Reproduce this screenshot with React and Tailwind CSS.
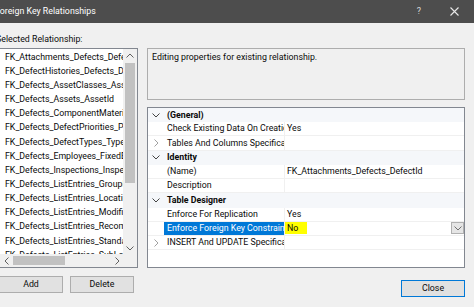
import React from "react";

const items = [
  "FK_Attachments_Defects_DefectId",
  "FK_DefectHistories_Defects_DefectId",
  "FK_Defects_AssetClasses_AssetClassId",
  "FK_Defects_Assets_AssetId",
  "FK_Defects_ComponentMaterials_MaterialId",
  "FK_Defects_DefectPriorities_PriorityId",
  "FK_Defects_DefectTypes_TypeId",
  "FK_Defects_Employees_FixedById",
  "FK_Defects_Inspections_InspectionId",
  "FK_Defects_ListEntries_GroupId",
  "FK_Defects_ListEntries_LocationId",
  "FK_Defects_ListEntries_ModifiedById",
  "FK_Defects_ListEntries_RecommendationId",
  "FK_Defects_ListEntries_StandardId",
  "FK_Defects_ListEntries_SubLocationId",
];

const Down = ({ className = "" }) => (
  <svg width="8" height="5" viewBox="0 0 8 5" className={className}>
    <path d="M0.5 0.5 L4 4 L7.5 0.5" fill="none" stroke="currentColor" strokeWidth="1" />
  </svg>
);
const Right = ({ className = "" }) => (
  <svg width="5" height="8" viewBox="0 0 5 8" className={className}>
    <path d="M0.5 0.5 L4 4 L0.5 7.5" fill="none" stroke="currentColor" strokeWidth="1" />
  </svg>
);
const Up = ({ className = "" }) => (
  <svg width="8" height="5" viewBox="0 0 8 5" className={className}>
    <path d="M0.5 4.5 L4 1 L7.5 4.5" fill="none" stroke="currentColor" strokeWidth="1" />
  </svg>
);
const Left = ({ className = "" }) => (
  <svg width="5" height="8" viewBox="0 0 5 8" className={className}>
    <path d="M4.5 0.5 L1 4 L4.5 7.5" fill="none" stroke="currentColor" strokeWidth="1" />
  </svg>
);

const rows = [
  { type: "cat", name: "(General)" },
  { name: "Check Existing Data On Creation Or Re-Enabling", value: "Yes" },
  { name: "Tables And Columns Specification", value: "", expand: true },
  { type: "cat", name: "Identity" },
  { name: "(Name)", value: "FK_Attachments_Defects_DefectId" },
  { name: "Description", value: "" },
  { type: "cat", name: "Table Designer" },
  { name: "Enforce For Replication", value: "Yes" },
  { name: "Enforce Foreign Key Constraint", value: "No", selected: true },
  { name: "INSERT And UPDATE Specification", value: "", expand: true },
];

export default function App() {
  return (
    <div className="w-[474px] h-[307px] bg-[#f0f0f0] flex flex-col overflow-hidden font-['Roboto',sans-serif] text-[8.8px] text-[#0a0a0a] leading-none">
      {/* title bar */}
      <div className="h-[23px] bg-[#4d4d4d] flex items-center text-white shrink-0">
        <span className="ml-[-5px] text-[8.8px] whitespace-nowrap">Foreign Key Relationships</span>
        <div className="flex-1" />
        <span className="text-[9px] text-[#d8d8d8] mr-[29px]">?</span>
        <svg width="9" height="9" viewBox="0 0 9 9" className="mr-[15px]">
          <path d="M0.5 0.5 L8.5 8.5 M8.5 0.5 L0.5 8.5" stroke="#e8e8e8" strokeWidth="1.1" />
        </svg>
      </div>

      <div className="flex flex-1 min-h-0">
        {/* left column */}
        <div className="w-[138px] flex flex-col shrink-0">
          <div className="h-[25px] flex items-center ml-[-4px] pt-[7px] whitespace-nowrap">Selected Relationship:</div>
          <div className="ml-[-1px] h-[220px] border border-[#828790] bg-white flex flex-col">
            <div className="flex flex-1 min-h-0">
              <div className="flex-1 overflow-hidden pt-[1px]">
                {items.map((t) => (
                  <div key={t} className="h-[14.15px] flex items-center pl-[5px] whitespace-nowrap">
                    {t}
                  </div>
                ))}
              </div>
              {/* vertical scrollbar */}
              <div className="w-[14px] bg-[#f0f0f0] flex flex-col items-center">
                <div className="h-[13px] flex items-center justify-center text-[#606060]">
                  <Up />
                </div>
                <div className="flex-1 w-full px-[2px] pt-[1px]">
                  <div className="h-[120px] bg-[#c1c1c1] w-full" />
                </div>
                <div className="h-[12px] flex items-center justify-center text-[#606060]">
                  <Down />
                </div>
              </div>
            </div>
            {/* horizontal scrollbar */}
            <div className="h-[13px] flex shrink-0">
              <div className="flex-1 bg-[#f0f0f0] flex items-center">
                <div className="w-[13px] flex justify-center text-[#606060]">
                  <Left />
                </div>
                <div className="w-[52px] h-[9px] bg-[#c1c1c1]" />
                <div className="flex-1" />
                <div className="w-[12px] flex justify-center text-[#606060]">
                  <Right />
                </div>
              </div>
              <div className="w-[14px] bg-[#f0f0f0]" />
            </div>
          </div>
          <div className="flex gap-[7px] mt-[8px] ml-[-1px]">
            <div className="w-[64px] h-[17px] bg-[#e1e1e1] border border-[#adadad] flex items-center justify-center">Add</div>
            <div className="w-[64px] h-[17px] bg-[#e1e1e1] border border-[#adadad] flex items-center justify-center">Delete</div>
          </div>
        </div>

        {/* right column */}
        <div className="ml-[9px] w-[318px] flex flex-col">
          <div className="mt-[25px] h-[52px] border border-[#adadad] bg-[#f0f0f0] pl-[4px] pt-[4px] whitespace-nowrap">
            Editing properties for existing relationship.
          </div>
          <div className="mt-[7px] h-[161px] border border-[#828790] bg-white flex flex-col overflow-hidden">
            {rows.map((r, i) => {
              if (r.type === "cat") {
                return (
                  <div key={i} className="h-[14.22px] flex items-center bg-[#f5f7fa] shrink-0">
                    <div className="w-[16px] flex justify-center text-[#444]">
                      <Down />
                    </div>
                    <span className="font-bold pl-[3px]">{r.name}</span>
                  </div>
                );
              }
              return (
                <div key={i} className="h-[14.22px] flex shrink-0 border-b border-[#f0f0f0]">
                  <div className="w-[16px] flex items-center justify-center text-[#a0a0a0]">
                    {r.expand ? <Right /> : null}
                  </div>
                  <div
                    className={
                      "w-[120px] overflow-hidden whitespace-nowrap flex items-center pl-[3px] " +
                      (r.selected ? "bg-[#0078d7] text-white" : "")
                    }
                  >
                    {r.name}
                  </div>
                  <div className="w-px bg-[#f0f0f0]" />
                  <div className="flex-1 flex items-center whitespace-nowrap">
                    {r.selected ? (
                      <>
                        <span className="bg-[#ffff00] h-[12px] w-[22px] flex items-center pl-[2px]">No</span>
                        <div className="flex-1" />
                        <div className="w-[13px] h-[12px] bg-[#e5e5e5] border border-[#b0b0b0] flex items-center justify-center text-[#707070]">
                          <Down />
                        </div>
                      </>
                    ) : (
                      <span className="pl-[2px]">{r.value}</span>
                    )}
                  </div>
                </div>
              );
            })}
          </div>
          <div className="flex justify-end mt-[12px]">
            <div className="w-[64px] h-[17px] bg-[#e1e1e1] border border-[#0078d7] flex items-center justify-center">Close</div>
          </div>
        </div>
      </div>
    </div>
  );
}
